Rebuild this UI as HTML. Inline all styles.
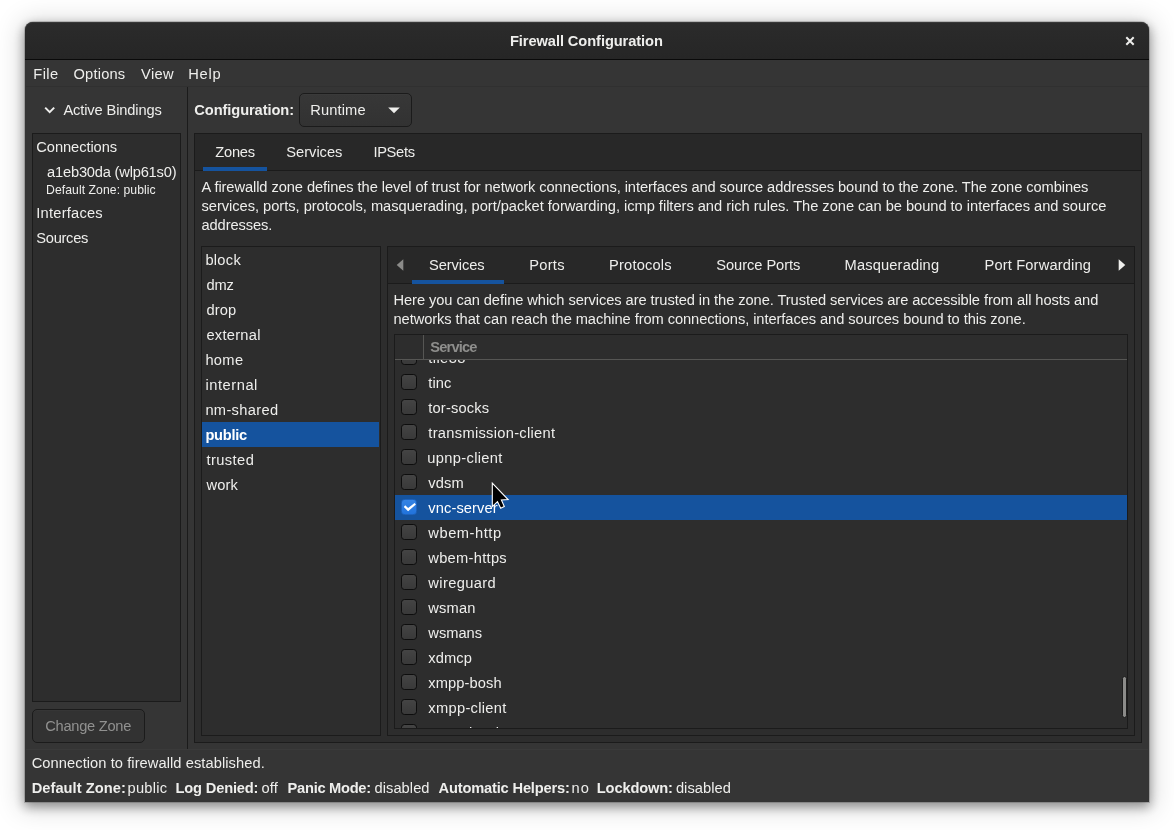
<!DOCTYPE html>
<html lang="en"><head><meta charset="utf-8"><title>Firewall Configuration</title>
<style>
*{box-sizing:border-box;margin:0;padding:0}
html,body{width:1174px;height:830px;overflow:hidden;background:#fff}
body{font-family:"Liberation Sans","DejaVu Sans",sans-serif;font-size:14.67px;color:#eeeeec;position:relative}
.abs{position:absolute}
.t{position:absolute;white-space:nowrap;line-height:20px;height:20px}
#win{position:absolute;left:25px;top:22px;width:1124px;height:780px;background:#353535;border-radius:8px 8px 0 0;
 box-shadow:0 0 0 1px rgba(0,0,0,.16),0 4px 11px 1px rgba(0,0,0,.38),0 3px 26px 5px rgba(0,0,0,.15)}
#edge{position:absolute;left:25px;top:60px;width:1124px;height:742px;border:1px solid #252525;border-top:0}
#title{position:absolute;left:25px;top:22px;width:1124px;height:38px;border-radius:8px 8px 0 0;background:linear-gradient(#2b2b2b,#262626);border-bottom:1px solid #0a0a0a;box-shadow:inset 0 1px rgba(238,238,236,.07)}
.pane{position:absolute;background:#2d2d2d;border:1px solid #1b1b1b}
.btn{position:absolute;border:1px solid #1b1b1b;border-radius:5px;background:linear-gradient(#373737,#323232);box-shadow:inset 0 1px rgba(255,255,255,.02)}
.cb{position:absolute;left:401px;width:16px;height:16px;border:1px solid #0d0d0d;border-radius:3.5px;background:linear-gradient(#444,#393939)}
.cb.on{border-color:#1d62bd;background:linear-gradient(#3584e4,#2173dc)}
#rows{position:absolute;left:395px;top:360px;width:732px;height:368px;overflow:hidden}
#rows .t,#rows .cb,#rows .abs{margin-left:-395px;margin-top:-360px}
</style></head><body>
<div id="all" style="position:absolute;left:0;top:0;width:1174px;height:830px;will-change:transform">
<div id="win"></div>
<div id="title"></div>
<div class="t" style="left:510.0px;top:31px;letter-spacing:-0.086px;font-weight:bold;">Firewall Configuration</div>
<svg class="abs" style="left:1124px;top:35px" width="12" height="12" viewBox="0 0 12 12"><path d="M2.3 2.3 L9.7 9.7 M9.7 2.3 L2.3 9.7" stroke="#eeeeec" stroke-width="2" fill="none"/></svg>
<div class="abs" style="left:26px;top:86px;width:1122px;height:1px;background:#303030"></div>
<div class="t" style="left:33.3px;top:64px;letter-spacing:0.433px;">File</div>
<div class="t" style="left:73.4px;top:64px;letter-spacing:0.217px;">Options</div>
<div class="t" style="left:141.0px;top:64px;letter-spacing:0.399px;">View</div>
<div class="t" style="left:188.3px;top:64px;letter-spacing:0.700px;">Help</div>
<div class="abs" style="left:187px;top:87px;width:1px;height:662px;background:#1b1b1b"></div>
<div class="abs" style="left:26px;top:749px;width:1122px;height:1px;background:#3a3a3a"></div>
<svg class="abs" style="left:42px;top:102px" width="16" height="16" viewBox="0 0 16 16"><path d="M3.2 5.6 L7.7 10.1 L12.2 5.6" stroke="#eeeeec" stroke-width="2" fill="none"/></svg>
<div class="t" style="left:63.4px;top:100px;letter-spacing:-0.122px;">Active Bindings</div>
<div class="pane" style="left:32px;top:133px;width:149px;height:569px"></div>
<div class="t" style="left:36.3px;top:137px;letter-spacing:-0.070px;">Connections</div>
<div class="t" style="left:47.1px;top:162px;letter-spacing:-0.200px;">a1eb30da (wlp61s0)</div>
<div class="t" style="left:46.1px;top:180px;letter-spacing:0.063px;font-size:12.2px;">Default Zone: public</div>
<div class="t" style="left:36.3px;top:203px;letter-spacing:0.222px;">Interfaces</div>
<div class="t" style="left:36.3px;top:228px;letter-spacing:-0.283px;">Sources</div>
<div class="btn" style="left:32px;top:709px;width:113px;height:34px;background:#323232"></div>
<div class="t" style="left:45.2px;top:716px;letter-spacing:-0.270px;color:#919190;">Change Zone</div>
<div class="t" style="left:194.3px;top:100px;letter-spacing:-0.093px;font-weight:bold;">Configuration:</div>
<div class="btn" style="left:299px;top:93px;width:113px;height:34px"></div>
<div class="t" style="left:310.2px;top:100px;letter-spacing:0.133px;">Runtime</div>
<svg class="abs" style="left:386px;top:105px" width="16" height="10" viewBox="0 0 16 10"><path d="M2.2 2.4 H13.8 L8 8.2 Z" fill="#eeeeec"/></svg>
<div class="pane" style="left:194px;top:133px;width:948px;height:610px"></div>
<div class="abs" style="left:195px;top:134px;width:946px;height:36px;background:#282828"></div>
<div class="abs" style="left:195px;top:170px;width:946px;height:1px;background:#1b1b1b"></div>
<div class="abs" style="left:203px;top:167px;width:64px;height:4px;background:#15539e"></div>
<div class="t" style="left:215.3px;top:142px;letter-spacing:-0.250px;">Zones</div>
<div class="t" style="left:286.3px;top:142px;letter-spacing:-0.014px;">Services</div>
<div class="t" style="left:373.4px;top:142px;letter-spacing:-0.320px;">IPSets</div>
<div class="t" style="left:201.5px;top:177px;letter-spacing:-0.078px;">A firewalld zone defines the level of trust for network connections, interfaces and source addresses bound to the zone. The zone combines</div>
<div class="t" style="left:201.5px;top:196px;letter-spacing:-0.029px;">services, ports, protocols, masquerading, port/packet forwarding, icmp filters and rich rules. The zone can be bound to interfaces and source</div>
<div class="t" style="left:201.5px;top:215px;letter-spacing:-0.090px;">addresses.</div>
<div class="pane" style="left:201px;top:246px;width:180px;height:490px"></div>
<div class="abs" style="left:202px;top:422px;width:177px;height:25px;background:#15539e"></div>
<div class="t" style="left:205.4px;top:250px;letter-spacing:0.275px;">block</div>
<div class="t" style="left:206.4px;top:275px;letter-spacing:-0.150px;">dmz</div>
<div class="t" style="left:206.4px;top:300px;letter-spacing:0.167px;">drop</div>
<div class="t" style="left:206.4px;top:325px;letter-spacing:0.272px;">external</div>
<div class="t" style="left:205.4px;top:350px;letter-spacing:0.333px;">home</div>
<div class="t" style="left:205.4px;top:375px;letter-spacing:0.557px;">internal</div>
<div class="t" style="left:205.4px;top:400px;letter-spacing:0.325px;">nm-shared</div>
<div class="t" style="left:205.4px;top:425px;letter-spacing:-0.280px;font-weight:bold;color:#ffffff;">public</div>
<div class="t" style="left:206.4px;top:450px;letter-spacing:0.433px;">trusted</div>
<div class="t" style="left:206.4px;top:475px;letter-spacing:0.167px;">work</div>
<div class="pane" style="left:387px;top:246px;width:748px;height:490px"></div>
<div class="abs" style="left:388px;top:247px;width:746px;height:36px;background:#282828"></div>
<div class="abs" style="left:388px;top:283px;width:746px;height:1px;background:#1b1b1b"></div>
<div class="abs" style="left:412px;top:280px;width:92px;height:4px;background:#15539e"></div>
<svg class="abs" style="left:394px;top:257px" width="12" height="16" viewBox="0 0 12 16"><path d="M9.3 2.2 V13.8 L2.7 8 Z" fill="#8b8b89"/></svg>
<svg class="abs" style="left:1116px;top:257px" width="12" height="16" viewBox="0 0 12 16"><path d="M2.7 2.2 V13.8 L9.3 8 Z" fill="#eeeeec"/></svg>
<div class="t" style="left:429.0px;top:255px;letter-spacing:-0.071px;">Services</div>
<div class="t" style="left:529.3px;top:255px;letter-spacing:0.250px;">Ports</div>
<div class="t" style="left:609.1px;top:255px;letter-spacing:0.164px;">Protocols</div>
<div class="t" style="left:716.2px;top:255px;letter-spacing:-0.045px;">Source Ports</div>
<div class="t" style="left:844.6px;top:255px;letter-spacing:0.145px;">Masquerading</div>
<div class="t" style="left:984.5px;top:255px;letter-spacing:0.151px;">Port Forwarding</div>
<div class="t" style="left:393.5px;top:290px;letter-spacing:-0.073px;">Here you can define which services are trusted in the zone. Trusted services are accessible from all hosts and</div>
<div class="t" style="left:393.5px;top:309px;letter-spacing:-0.068px;">networks that can reach the machine from connections, interfaces and sources bound to this zone.</div>
<div class="pane" style="left:394px;top:334px;width:734px;height:395px"></div>
<div class="abs" style="left:395px;top:359px;width:732px;height:1px;background:#565654"></div>
<div class="abs" style="left:423px;top:335px;width:1px;height:25px;background:#565654"></div>
<div class="t" style="left:430.3px;top:337px;letter-spacing:-0.833px;font-weight:bold;color:#8e8e8c;">Service</div>
<div id="rows">
<div class="abs" style="left:395px;top:495px;width:732px;height:25px;background:#15539e"></div>
<div class="cb" style="top:349px"></div><div class="t" style="left:428.3px;top:348px;letter-spacing:0.400px;">tile38</div>
<div class="cb" style="top:374px"></div><div class="t" style="left:428.3px;top:373px;letter-spacing:0.033px;">tinc</div>
<div class="cb" style="top:399px"></div><div class="t" style="left:428.3px;top:398px;letter-spacing:0.161px;">tor-socks</div>
<div class="cb" style="top:424px"></div><div class="t" style="left:428.3px;top:423px;letter-spacing:0.300px;">transmission-client</div>
<div class="cb" style="top:449px"></div><div class="t" style="left:427.3px;top:448px;letter-spacing:0.340px;">upnp-client</div>
<div class="cb" style="top:474px"></div><div class="t" style="left:428.3px;top:473px;letter-spacing:0.099px;">vdsm</div>
<div class="cb on" style="top:499px"></div><div class="t" style="left:428.3px;top:498px;letter-spacing:0.099px;color:#ffffff;">vnc-server</div>
<div class="cb" style="top:524px"></div><div class="t" style="left:428.3px;top:523px;letter-spacing:0.550px;">wbem-http</div>
<div class="cb" style="top:549px"></div><div class="t" style="left:428.3px;top:548px;letter-spacing:0.289px;">wbem-https</div>
<div class="cb" style="top:574px"></div><div class="t" style="left:428.3px;top:573px;letter-spacing:0.386px;">wireguard</div>
<div class="cb" style="top:599px"></div><div class="t" style="left:428.3px;top:598px;letter-spacing:0.200px;">wsman</div>
<div class="cb" style="top:624px"></div><div class="t" style="left:428.3px;top:623px;letter-spacing:0.000px;">wsmans</div>
<div class="cb" style="top:649px"></div><div class="t" style="left:428.3px;top:648px;letter-spacing:0.100px;">xdmcp</div>
<div class="cb" style="top:674px"></div><div class="t" style="left:428.3px;top:673px;letter-spacing:0.100px;">xmpp-bosh</div>
<div class="cb" style="top:699px"></div><div class="t" style="left:428.3px;top:698px;letter-spacing:0.310px;">xmpp-client</div>
<div class="cb" style="top:724px"></div><div class="t" style="left:428.3px;top:723px;letter-spacing:-0.012px;">xmpp-local</div>
<svg class="abs" style="left:401px;top:499px" width="16" height="16" viewBox="0 0 16 16"><path d="M2.8 8.1 L4.2 6.3 L7.1 8.9 L13.6 3.9 L14.9 5.6 L7.1 12.2 Z" fill="#fff"/></svg>
</div>
<div class="abs" style="left:1122px;top:676px;width:5px;height:42px;background:#8b8b89;border:1px solid #1d1d1d;border-radius:3px"></div>
<div class="t" style="left:31.7px;top:753px;letter-spacing:0.071px;">Connection to firewalld established.</div>
<div class="t" style="left:31.7px;top:778px;letter-spacing:0.042px;font-weight:bold;">Default Zone:</div>
<div class="t" style="left:127.5px;top:778px;letter-spacing:0.280px;">public</div>
<div class="t" style="left:175.5px;top:778px;letter-spacing:-0.170px;font-weight:bold;">Log Denied:</div>
<div class="t" style="left:261.4px;top:778px;letter-spacing:0.150px;">off</div>
<div class="t" style="left:287.6px;top:778px;letter-spacing:-0.280px;font-weight:bold;">Panic Mode:</div>
<div class="t" style="left:374.5px;top:778px;letter-spacing:0.056px;">disabled</div>
<div class="t" style="left:438.5px;top:778px;letter-spacing:-0.176px;font-weight:bold;">Automatic Helpers:</div>
<div class="t" style="left:571.6px;top:778px;letter-spacing:0.900px;">no</div>
<div class="t" style="left:596.8px;top:778px;letter-spacing:-0.150px;font-weight:bold;">Lockdown:</div>
<div class="t" style="left:675.9px;top:778px;letter-spacing:0.056px;">disabled</div>
<svg class="abs" style="left:486px;top:478px" width="28" height="36" viewBox="486 478 28 36"><path d="M492.3 483.2 L492.3 506.6 L497.5 501.7 L500.7 508.2 L504.3 506.5 L501.4 500 L508.1 499.6 Z" fill="#000" stroke="#fff" stroke-width="1.1" stroke-linejoin="miter"/></svg>
</div>
</body></html>
